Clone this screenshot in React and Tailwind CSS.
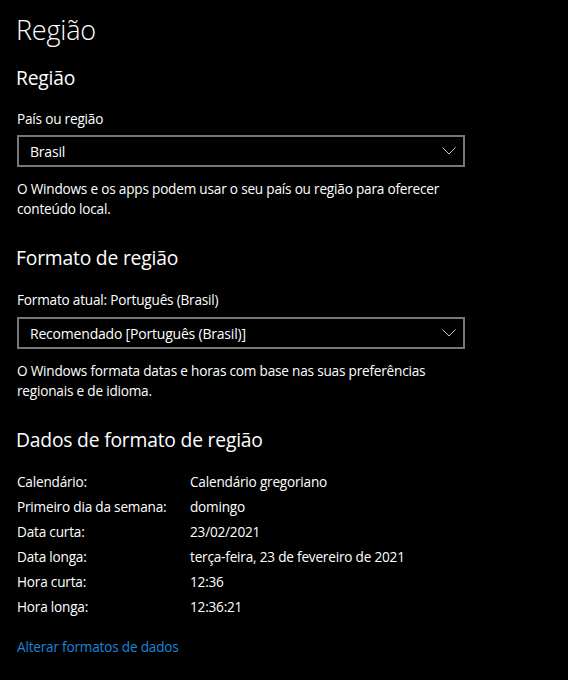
import React from 'react';

// chevron used in the Windows combo boxes
const Chevron = () => (
  <svg width="14" height="8" viewBox="0 0 14 8" fill="none">
    <path d="M0.5 0.5 L7 7 L13.5 0.5" stroke="#c8c8c8" strokeWidth="1" />
  </svg>
);

const Select = ({ value }) => (
  <div className="w-[448px] h-[32px] border-2 border-[#777777] flex items-center justify-between pl-[11px] pr-[7px] text-[14px] text-white">
    <span>{value}</span>
    <Chevron />
  </div>
);

const rows = [
  ['Calendário:', 'Calendário gregoriano'],
  ['Primeiro dia da semana:', 'domingo'],
  ['Data curta:', '23/02/2021'],
  ['Data longa:', 'terça-feira, 23 de fevereiro de 2021'],
  ['Hora curta:', '12:36'],
  ['Hora longa:', '12:36:21'],
];

export default function App() {
  return (
    <div className="w-[568px] h-[680px] bg-black text-white overflow-hidden font-['Open_Sans'] tracking-[-0.2px]">
      <div className="pl-[16px] pt-[12px]">
        <h1 className="text-[27px] font-light leading-[36px]">Região</h1>

        <h2 className="mt-[17px] text-[19.3px] leading-[26px]">Região</h2>
        <div className="pl-[1px]">
          <div className="mt-[18px] text-[13.6px] leading-[20px]">País ou região</div>
          <div className="mt-[6px]"><Select value="Brasil" /></div>
          <p className="mt-[12px] text-[13.6px] leading-[20px] w-[440px]">
            O Windows e os apps podem usar o seu país ou região para oferecer conteúdo local.
          </p>
        </div>

        <h2 className="mt-[26px] text-[19.3px] leading-[26px]">Formato de região</h2>
        <div className="pl-[1px]">
          <div className="mt-[19px] text-[13.6px] leading-[20px]">Formato atual: Português (Brasil)</div>
          <div className="mt-[7px]"><Select value="Recomendado [Português (Brasil)]" /></div>
          <p className="mt-[12px] text-[13.6px] leading-[20px] w-[440px]">
            O Windows formata datas e horas com base nas suas preferências regionais e de idioma.
          </p>
        </div>

        <h2 className="mt-[26px] text-[19.3px] leading-[26px]">Dados de formato de região</h2>
        <div className="pl-[1px] mt-[17px] text-[13.6px]">
          {rows.map(([k, v]) => (
            <div key={k} className="flex h-[25px] items-center">
              <span className="w-[173px]">{k}</span>
              <span>{v}</span>
            </div>
          ))}
          <div className="mt-[17px] text-[#1a86d9] leading-[20px]">Alterar formatos de dados</div>
        </div>
      </div>
    </div>
  );
}
